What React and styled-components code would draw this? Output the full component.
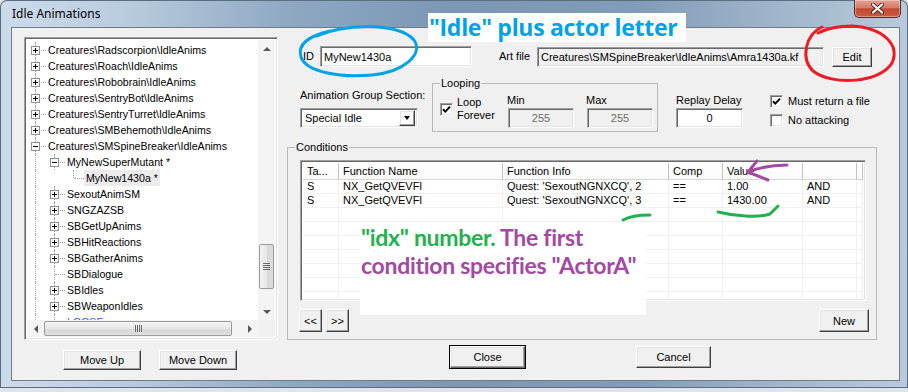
import React from "react";
import styled, { createGlobalStyle, css } from "styled-components";

const GlobalStyle = createGlobalStyle`
  html, body {
    margin: 0;
    padding: 0;
  }
  body {
    background: #dfe4ea;
    font-family: "Liberation Sans", Arial, sans-serif;
    font-size: 11px;
    color: #000;
    overflow: hidden;
  }
`;

// classic win32 borders
const sunken = css`
  box-sizing: border-box;
  border: 1px solid;
  border-color: #a0a0a0 #fff #fff #a0a0a0;
  box-shadow: inset 1px 1px #696969, inset -1px -1px #e3e3e3;
`;

const raised = css`
  box-sizing: border-box;
  border: 1px solid;
  border-color: #fff #404040 #404040 #fff;
  box-shadow: inset -1px -1px #a0a0a0, inset 1px 1px #e3e3e3;
`;

//Window frame
const Window = styled.div`
  position: relative;
  width: 908px;
  height: 388px;
  box-sizing: border-box;
  padding: 0 8px 7px 11px;
  display: flex;
  flex-direction: column;
  border-radius: 7px 7px 0 0;
  background: linear-gradient(90deg, #cddcec 0%, #b9cbde 14%, #8ea8c2 32%, #7b97b3 50%, #819cb7 70%, #a4b9ce 88%, #b8cadc 100%);
  box-shadow: inset 0 0 0 1px #5b6d80;
`;

const TitleBar = styled.div`
  height: 27px;
  display: flex;
  justify-content: space-between;
  align-items: flex-start;
  flex: none;
`;

const TitleText = styled.div`
  padding: 6px 0 0 1px;
  font-family: "Noto Sans", "Liberation Sans", sans-serif;
  font-size: 12px;
  line-height: 15px;
  color: #000;
`;

const CloseButton = styled.div`
  width: 47px;
  height: 18px;
  margin-right: -1px;
  display: flex;
  align-items: center;
  justify-content: center;
  border: 1px solid #5a2a24;
  border-top: none;
  border-radius: 0 0 5px 5px;
  box-sizing: border-box;
  background: linear-gradient(180deg, #e3a396 0%, #d67a66 45%, #c24a32 52%, #cc5c43 100%);
  box-shadow: inset 0 0 0 1px rgba(255, 255, 255, 0.35);
`;

const CloseGlyph = () => (
  <svg width="13" height="11" viewBox="0 0 13 11">
    <path d="M2 1.5 L11 9.5 M11 1.5 L2 9.5" stroke="#4a2520" strokeWidth="4" strokeLinecap="round" />
    <path d="M2 1.5 L11 9.5 M11 1.5 L2 9.5" stroke="#fff" strokeWidth="2.2" strokeLinecap="round" />
  </svg>
);

//Client area
const Client = styled.div`
  flex: 1;
  display: flex;
  padding: 9px 0 0 12px;
  background: #f0f0f0;
  border: 1px solid #6f7b89;
`;

const LeftColumn = styled.div`
  width: 254px;
  display: flex;
  flex-direction: column;
  flex: none;
`;

const RightColumn = styled.div`
  width: 590px;
  margin-left: 9px;
  display: flex;
  flex-direction: column;
  flex: none;
`;

//Tree view
const TreeBox = styled.div`
  ${sunken};
  width: 254px;
  height: 303px;
  background: #fff;
  display: grid;
  grid-template-columns: 1fr 17px;
  grid-template-rows: 1fr 17px;
  padding: 2px;
`;

const TreeContent = styled.div`
  overflow: hidden;
  padding-top: 2px;
  font-size: 10.6px;
`;

const TreeRow = styled.div`
  display: flex;
  align-items: center;
  height: 16px;
  white-space: nowrap;
`;

const Guide = styled.span`
  position: relative;
  flex: none;
  width: 19px;
  height: 16px;

  &::before {
    content: "";
    position: absolute;
    left: 8px;
    top: 0;
    bottom: 0;
    border-left: 1px dotted #a0a0a0;
    display: ${(p) => (p.$on ? "block" : "none")};
  }
`;

const NodeCell = styled.span`
  position: relative;
  flex: none;
  width: 19px;
  height: 16px;

  &::before {
    content: "";
    position: absolute;
    left: 8px;
    top: 0;
    bottom: ${(p) => (p.$last ? "8px" : "0")};
    border-left: 1px dotted #a0a0a0;
  }

  &::after {
    content: "";
    position: absolute;
    left: 9px;
    right: 0;
    top: 8px;
    border-top: 1px dotted #a0a0a0;
  }
`;

const Toggle = styled.span`
  position: absolute;
  left: 4px;
  top: 4px;
  width: 9px;
  height: 9px;
  box-sizing: border-box;
  border: 1px solid #919191;
  background: #fff;
  z-index: 1;

  &::before {
    content: "";
    position: absolute;
    left: 1px;
    right: 1px;
    top: 3px;
    height: 1px;
    background: #000;
  }

  &::after {
    content: "";
    position: absolute;
    top: 1px;
    bottom: 1px;
    left: 3px;
    width: 1px;
    background: #000;
    display: ${(p) => (p.$open ? "none" : "block")};
  }
`;

const NodeLabel = styled.span`
  padding: 0 2px;
  line-height: 16px;
  color: ${(p) => (p.$link ? "#2a62c9" : "#000")};
  background: ${(p) => (p.$selected ? "#ebebeb" : "transparent")};
`;

//Scrollbars
const VScroll = styled.div`
  display: flex;
  flex-direction: column;
  background: #f4f4f4;
`;

const HScroll = styled.div`
  display: flex;
  background: #f4f4f4;
`;

const Corner = styled.div`
  background: #f0f0f0;
`;

const arrowShapes = {
  up: css`border-left: 4px solid transparent; border-right: 4px solid transparent; border-bottom: 4px solid #5a5a5a;`,
  down: css`border-left: 4px solid transparent; border-right: 4px solid transparent; border-top: 4px solid #5a5a5a;`,
  left: css`border-top: 4px solid transparent; border-bottom: 4px solid transparent; border-right: 4px solid #5a5a5a;`,
  right: css`border-top: 4px solid transparent; border-bottom: 4px solid transparent; border-left: 4px solid #5a5a5a;`,
};

const ScrollArrow = styled.div`
  width: 17px;
  height: 17px;
  flex: none;
  display: flex;
  align-items: center;
  justify-content: center;

  &::before {
    content: "";
    width: 0;
    height: 0;
    ${(p) => arrowShapes[p.$dir]};
  }
`;

const Track = styled.div`
  flex: 1;
  display: flex;
  flex-direction: ${(p) => (p.$vertical ? "column" : "row")};
`;

const Thumb = styled.div`
  box-sizing: border-box;
  border: 1px solid #9a9a9a;
  border-radius: 2px;
  display: flex;
  align-items: center;
  justify-content: center;
  ${(p) =>
    p.$vertical
      ? css`
          margin: ${p.$offset}px 0 0 1px;
          width: 15px;
          height: ${p.$size}px;
          background: linear-gradient(90deg, #f3f3f3, #e8e8e8 50%, #d8d8d8 51%, #dedede);
        `
      : css`
          margin: 1px 0 0 ${p.$offset}px;
          height: 15px;
          width: ${p.$size}px;
          background: linear-gradient(180deg, #f3f3f3, #e8e8e8 50%, #d8d8d8 51%, #dedede);
        `}
`;

const Grip = styled.span`
  width: 7px;
  height: 7px;
  background: repeating-linear-gradient(
    ${(p) => (p.$vertical ? "180deg" : "90deg")},
    #6a6a6a 0 1px,
    transparent 1px 2px
  );
`;

//Buttons
const Button = styled.div`
  ${raised};
  width: ${(p) => p.$w}px;
  height: ${(p) => p.$h || 20}px;
  background: #f0f0f0;
  display: flex;
  align-items: center;
  justify-content: center;
  flex: none;
  ${(p) =>
    p.$default &&
    css`
      outline: 1px solid #000;
      outline-offset: 0;
      border-color: #fff #696969 #696969 #fff;
    `}
`;

const LeftButtons = styled.div`
  display: flex;
  gap: 18px;
  padding-left: 39px;
  margin-top: 10px;
`;

//Form parts
const FieldRow = styled.div`
  display: flex;
  align-items: center;
  margin-top: ${(p) => p.$top || 0}px;
  padding-left: ${(p) => p.$pad || 0}px;
`;

const Label = styled.span`
  flex: none;
  width: ${(p) => (p.$w ? `${p.$w}px` : "auto")};
  margin-left: ${(p) => p.$ml || 0}px;
  line-height: 13px;
  white-space: nowrap;
`;

const TextBox = styled.div`
  ${sunken};
  flex: none;
  width: ${(p) => p.$w}px;
  height: ${(p) => p.$h || 20}px;
  margin-left: ${(p) => p.$ml || 0}px;
  padding: 0 3px;
  display: flex;
  align-items: center;
  justify-content: ${(p) => (p.$center ? "center" : "flex-start")};
  background: ${(p) => (p.$disabled ? "#f0f0f0" : "#fff")};
  color: ${(p) => (p.$muted ? "#6d6d6d" : "#000")};
  white-space: nowrap;
  overflow: hidden;
`;

const Select = styled.div`
  ${sunken};
  width: 118px;
  height: 20px;
  margin-top: 6px;
  background: #fff;
  display: flex;
  align-items: center;
  justify-content: space-between;
  padding: 2px 2px 2px 4px;
`;

const SelectButton = styled.div`
  ${raised};
  width: 16px;
  height: 16px;
  display: flex;
  align-items: center;
  justify-content: center;

  &::before {
    content: "";
    border-left: 3.5px solid transparent;
    border-right: 3.5px solid transparent;
    border-top: 4px solid #000;
  }
`;

const SettingsRow = styled.div`
  display: flex;
  align-items: flex-start;
  margin-top: 10px;
`;

const Stack = styled.div`
  display: flex;
  flex-direction: column;
  flex: none;
  width: ${(p) => (p.$w ? `${p.$w}px` : "auto")};
  margin-left: ${(p) => p.$ml || 0}px;
  margin-top: ${(p) => p.$mt || 0}px;
`;

const GroupBox = styled.fieldset`
  margin: ${(p) => p.$mt || 0}px 0 0 ${(p) => p.$ml || 0}px;
  padding: 0;
  min-width: 0;
  box-sizing: border-box;
  width: ${(p) => p.$w}px;
  height: ${(p) => p.$h}px;
  border: 1px solid #b9b9b9;
  flex: none;

  > legend {
    margin-left: 7px;
    padding: 0 1px;
    line-height: 13px;
    font-size: 11px;
  }
`;

const LoopingBody = styled.div`
  display: flex;
  align-items: flex-start;
  padding-left: 7px;
`;

const LoopOption = styled.div`
  width: 67px;
  flex: none;
  display: flex;
  align-items: center;
  margin-top: 6px;
`;

const CheckBox = styled.span`
  ${sunken};
  width: 13px;
  height: 13px;
  flex: none;
  background: #fff;
  display: flex;
  align-items: center;
  justify-content: center;
`;

const CheckMark = () => (
  <svg width="9" height="9" viewBox="0 0 9 9">
    <path d="M1 4.2 L3.3 6.6 L8 1.6" fill="none" stroke="#000" strokeWidth="2" />
  </svg>
);

const CheckText = styled.span`
  margin-left: ${(p) => p.$ml || 5}px;
  line-height: 13px;
`;

const CheckLine = styled.div`
  display: flex;
  align-items: center;
  height: 13px;
  margin-bottom: 6px;
`;

//Conditions list
const ConditionsBody = styled.div`
  padding: 6px 10px 0 12px;
`;

const ListView = styled.div`
  ${sunken};
  width: 566px;
  height: 141px;
  padding: 2px;
  background: #fff;
  overflow: hidden;
  display: grid;
  grid-template-columns: 36px 164px 166px 54px 80px 54px 1fr;
  grid-template-rows: 17px;
  grid-auto-rows: 14px;
`;

const HeaderCell = styled.div`
  box-sizing: border-box;
  padding-left: 4px;
  line-height: 16px;
  border-right: 1px solid #c4c4c4;
  border-bottom: 1px solid #d5d5d5;
  background: linear-gradient(180deg, #fff, #fafafa);
  white-space: nowrap;
  overflow: hidden;
`;

const Cell = styled.div`
  box-sizing: border-box;
  padding-left: 4px;
  line-height: 13px;
  border-right: 1px solid #f0f0f0;
  border-bottom: 1px solid #f0f0f0;
  white-space: nowrap;
  overflow: hidden;
`;

const NavRow = styled.div`
  display: flex;
  margin-top: 8px;
  gap: 4px;
`;

const BottomRow = styled.div`
  display: flex;
  gap: 111px;
  padding-left: 163px;
  margin-top: 6px;
`;

//Annotations drawn over the screenshot
const Callout = styled.div`
  position: absolute;
  left: ${(p) => p.$x}px;
  top: ${(p) => p.$y}px;
  width: ${(p) => p.$w}px;
  height: ${(p) => p.$h}px;
  background: #fff;
  font-family: ${(p) => (p.$narrow ? "Lato" : "\"Open Sans\"")}, "Liberation Sans", sans-serif;
  font-weight: 700;
  font-size: ${(p) => p.$size}px;
  line-height: ${(p) => p.$lh}px;
  padding: ${(p) => p.$pt || 0}px 0 0 1px;
  box-sizing: border-box;
  white-space: nowrap;
  letter-spacing: -0.3px;
`;

const Ink = styled.span`
  color: ${(p) => p.$c};
`;

const Scribbles = styled.svg`
  position: absolute;
  left: 0;
  top: 0;
  pointer-events: none;
`;

const treeRows = [
  { level: 0, text: "Creatures\\Radscorpion\\IdleAnims", toggle: "plus" },
  { level: 0, text: "Creatures\\Roach\\IdleAnims", toggle: "plus" },
  { level: 0, text: "Creatures\\Robobrain\\IdleAnims", toggle: "plus" },
  { level: 0, text: "Creatures\\SentryBot\\IdleAnims", toggle: "plus" },
  { level: 0, text: "Creatures\\SentryTurret\\IdleAnims", toggle: "plus" },
  { level: 0, text: "Creatures\\SMBehemoth\\IdleAnims", toggle: "plus" },
  { level: 0, text: "Creatures\\SMSpineBreaker\\IdleAnims", toggle: "minus" },
  { level: 1, text: "MyNewSuperMutant *", toggle: "minus" },
  { level: 2, text: "MyNew1430a *", last: true, selected: true },
  { level: 1, text: "SexoutAnimSM", toggle: "plus" },
  { level: 1, text: "SNGZAZSB", toggle: "plus" },
  { level: 1, text: "SBGetUpAnims", toggle: "plus" },
  { level: 1, text: "SBHitReactions", toggle: "plus" },
  { level: 1, text: "SBGatherAnims", toggle: "plus" },
  { level: 1, text: "SBDialogue" },
  { level: 1, text: "SBIdles", toggle: "plus" },
  { level: 1, text: "SBWeaponIdles", toggle: "plus" },
  { level: 1, text: "LOOSE", link: true },
];

const columns = ["Ta...", "Function Name", "Function Info", "Comp", "Value", "", ""];

const conditions = [
  ["S", "NX_GetQVEVFl", "Quest: 'SexoutNGNXCQ', 2", "==", "1.00", "AND", ""],
  ["S", "NX_GetQVEVFl", "Quest: 'SexoutNGNXCQ', 3", "==", "1430.00", "AND", ""],
];

const emptyRows = 7;

const Tree = () => (
  <TreeBox>
    <TreeContent>
      {treeRows.map((row, i) => (
        <TreeRow key={i}>
          {Array.from({ length: row.level }).map((_, g) => (
            <Guide key={g} $on={!(row.level === 2 && g === 1)} />
          ))}
          <NodeCell $last={row.last}>
            {row.toggle && <Toggle $open={row.toggle === "minus"} />}
          </NodeCell>
          <NodeLabel $selected={row.selected} $link={row.link}>
            {row.text}
          </NodeLabel>
        </TreeRow>
      ))}
    </TreeContent>
    <VScroll>
      <ScrollArrow $dir="up" />
      <Track $vertical>
        <Thumb $vertical $offset={187} $size={45}>
          <Grip $vertical />
        </Thumb>
      </Track>
      <ScrollArrow $dir="down" />
    </VScroll>
    <HScroll>
      <ScrollArrow $dir="left" />
      <Track>
        <Thumb $offset={0} $size={188}>
          <Grip />
        </Thumb>
      </Track>
      <ScrollArrow $dir="right" />
    </HScroll>
    <Corner />
  </TreeBox>
);

const Conditions = () => (
  <GroupBox $w={590} $h={199} $mt={8}>
    <legend>Conditions</legend>
    <ConditionsBody>
      <ListView>
        {columns.map((c, i) => (
          <HeaderCell key={`h${i}`}>{c}</HeaderCell>
        ))}
        {conditions.map((row, r) =>
          row.map((c, i) => <Cell key={`c${r}-${i}`}>{c}</Cell>)
        )}
        {Array.from({ length: emptyRows * columns.length }).map((_, i) => (
          <Cell key={`e${i}`} />
        ))}
      </ListView>
      <NavRow>
        <Button $w={23} $h={23} style={{ marginLeft: -1 }}>&lt;&lt;</Button>
        <Button $w={23} $h={23}>&gt;&gt;</Button>
        <Button $w={50} $h={23} style={{ marginLeft: "auto", marginRight: -3 }}>New</Button>
      </NavRow>
    </ConditionsBody>
  </GroupBox>
);

export default function App() {
  return (
    <>
      <GlobalStyle />
      <Window>
        <TitleBar>
          <TitleText>Idle Animations</TitleText>
          <CloseButton>
            <CloseGlyph />
          </CloseButton>
        </TitleBar>
        <Client>
          <LeftColumn>
            <Tree />
            <LeftButtons>
              <Button $w={78}>Move Up</Button>
              <Button $w={78}>Move Down</Button>
            </LeftButtons>
          </LeftColumn>

          <RightColumn>
            <FieldRow $top={9} $pad={16}>
              <Label $w={17}>ID</Label>
              <TextBox $w={152} $h={21}>MyNew1430a</TextBox>
              <Label $w={38} $ml={27}>Art file</Label>
              <TextBox $w={287} $disabled>
                Creatures\SMSpineBreaker\IdleAnims\Amra1430a.kf
              </TextBox>
              <Button $w={40} style={{ marginLeft: 8 }}>Edit</Button>
            </FieldRow>

            <SettingsRow>
              <Stack $w={118} $ml={13} $mt={12}>
                <Label>Animation Group Section:</Label>
                <Select>
                  <span>Special Idle</span>
                  <SelectButton />
                </Select>
              </Stack>

              <GroupBox $w={226} $h={55} $ml={14}>
                <legend>Looping</legend>
                <LoopingBody>
                  <LoopOption>
                    <CheckBox>
                      <CheckMark />
                    </CheckBox>
                    <CheckText $ml={4}>
                      Loop
                      <br />
                      Forever
                    </CheckText>
                  </LoopOption>
                  <Stack $mt={4}>
                    <Label>Min</Label>
                    <TextBox $w={66} $ml={1} $disabled $muted $center style={{ marginTop: 1 }}>255</TextBox>
                  </Stack>
                  <Stack $mt={4} $ml={12}>
                    <Label>Max</Label>
                    <TextBox $w={66} $ml={1} $disabled $muted $center style={{ marginTop: 1 }}>255</TextBox>
                  </Stack>
                </LoopingBody>
              </GroupBox>

              <Stack $ml={18} $mt={17}>
                <Label>Replay Delay</Label>
                <TextBox $w={67} $center style={{ marginTop: 1 }}>0</TextBox>
              </Stack>

              <Stack $ml={27} $mt={18}>
                <CheckLine>
                  <CheckBox>
                    <CheckMark />
                  </CheckBox>
                  <CheckText>Must return a file</CheckText>
                </CheckLine>
                <CheckLine>
                  <CheckBox />
                  <CheckText>No attacking</CheckText>
                </CheckLine>
              </Stack>
            </SettingsRow>

            <Conditions />

            <BottomRow>
              <Button $w={75} $h={22} $default>Close</Button>
              <Button $w={75} $h={22}>Cancel</Button>
            </BottomRow>
          </RightColumn>
        </Client>

        <Callout $x={428} $y={13} $w={258} $h={29} $lh={29} $size={23}>
          <Ink $c="#00a2e8">"Idle" plus actor letter</Ink>
        </Callout>
        <Callout $x={360} $y={222} $w={286} $h={93} $lh={28} $size={23} $pt={1} $narrow>
          <Ink $c="#22b14c">"idx" number.</Ink> <Ink $c="#a349a4">The first</Ink>
          <br />
          <Ink $c="#a349a4">condition specifies "ActorA"</Ink>
        </Callout>

        <Scribbles width="908" height="392" viewBox="0 0 908 392">
          <path
            d="M316 36 C345 24, 398 22, 414 40 C424 54, 404 72, 372 75 C340 78, 306 72, 301 57 C297 44, 309 36, 330 31"
            fill="none"
            stroke="#00a2e8"
            strokeWidth="3"
            strokeLinecap="round"
          />
          <path
            d="M822 27 C806 34, 800 58, 813 71 C832 86, 880 83, 892 63 C900 45, 884 28, 852 26 C836 26, 826 29, 818 33"
            fill="none"
            stroke="#ed1c24"
            strokeWidth="3"
            strokeLinecap="round"
          />
          <path
            d="M787 165 C776 165, 760 167, 748 172 M757 161 L748 172 L768 180"
            fill="none"
            stroke="#a349a4"
            strokeWidth="3"
            strokeLinecap="round"
            strokeLinejoin="round"
          />
          <path
            d="M718 212 C734 216, 758 218, 770 214 L778 206"
            fill="none"
            stroke="#22b14c"
            strokeWidth="3"
            strokeLinecap="round"
          />
          <path
            d="M623 220 C630 216, 640 215, 650 215"
            fill="none"
            stroke="#22b14c"
            strokeWidth="3"
            strokeLinecap="round"
          />
        </Scribbles>
      </Window>
    </>
  );
}
